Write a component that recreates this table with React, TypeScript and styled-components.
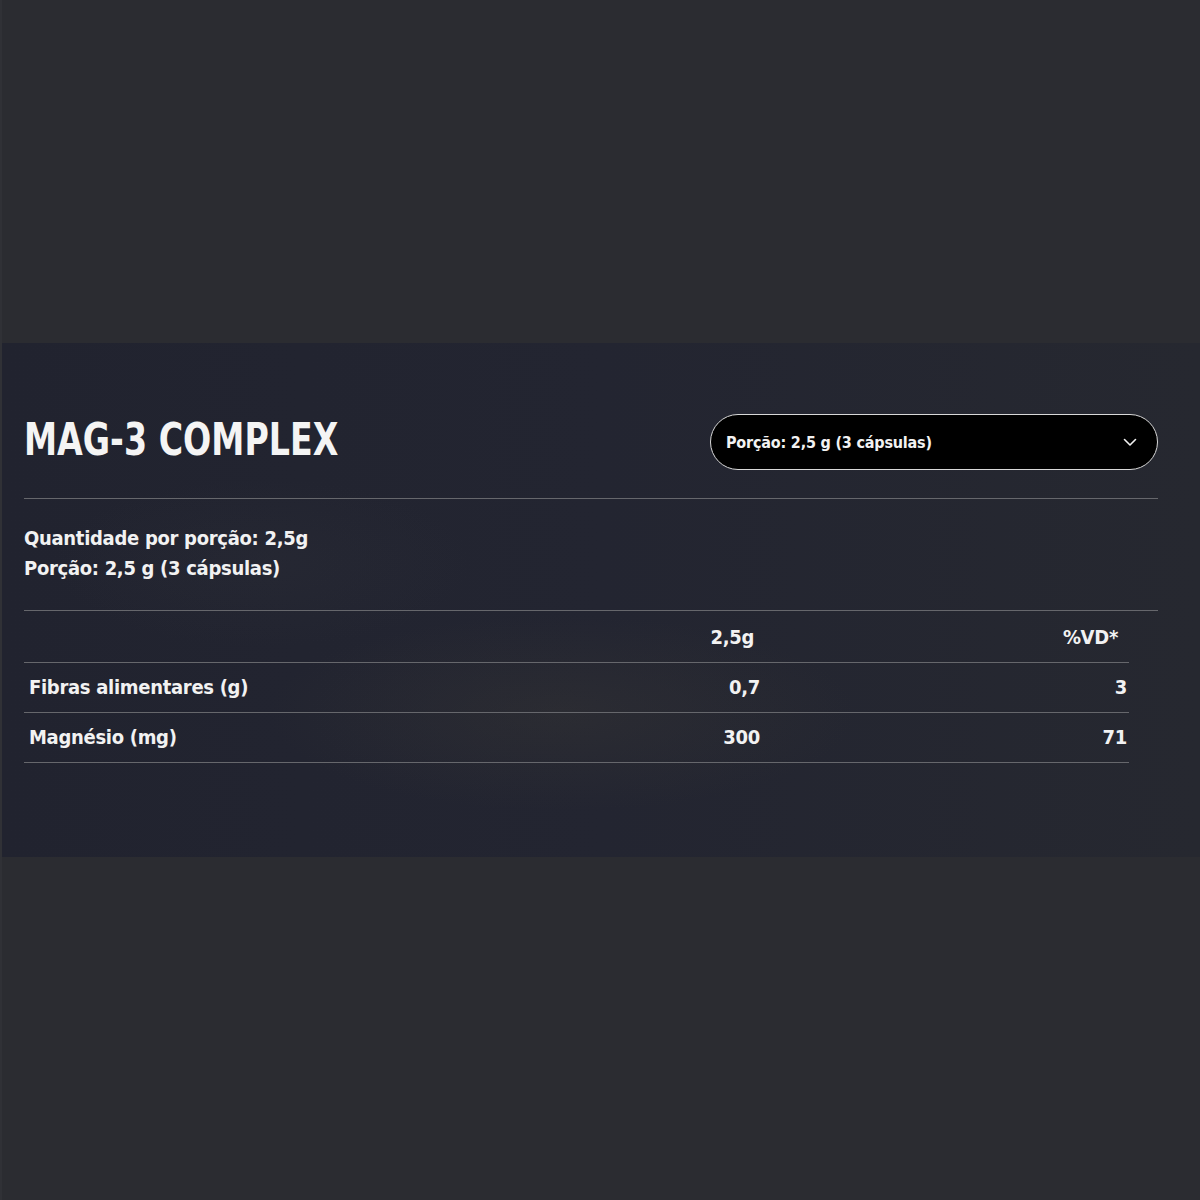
import React from "react";
import styled, { createGlobalStyle } from "styled-components";

const Global = createGlobalStyle`
  html, body { margin: 0; padding: 0; background: #2b2c31; }
  body { font-family: "DejaVu Sans Condensed", "DejaVu Sans", sans-serif; color: #f2f2f2; }
  * { box-sizing: border-box; }
`;

const Page = styled.div`
  width: 1200px;
  height: 1200px;
  padding-top: 343px;
  background: #2b2c31;
  border-left: 2px solid #303136;
`;

const Section = styled.section`
  height: 514px;
  padding: 71px 42px 0 22px;
  background:
    radial-gradient(ellipse 420px 140px at 560px 370px, rgba(62, 60, 54, 0.3), transparent 70%),
    radial-gradient(ellipse 300px 120px at 260px 220px, rgba(50, 52, 60, 0.22), transparent 70%),
    linear-gradient(90deg, #21232f 0%, #232531 50%, #262830 100%);
`;

const HeaderRow = styled.div`
  display: flex;
  align-items: center;
  justify-content: space-between;
  height: 56px;
  margin-bottom: 28px;
`;

const Title = styled.h2`
  margin: 0;
  font-weight: 700;
  font-size: 44px;
  line-height: 1;
  color: #f4f4f4;
  transform: translateY(-2px) scaleX(0.84);
  transform-origin: left center;
  white-space: nowrap;
`;

const Select = styled.button`
  width: 448px;
  height: 56px;
  border: 1.5px solid #d8d8d8;
  border-radius: 28px;
  background: #000;
  color: #f2f2f2;
  display: flex;
  align-items: center;
  justify-content: space-between;
  padding: 0 19px 0 15px;
  font-family: inherit;
  font-weight: 700;
  font-size: 16px;
  letter-spacing: -0.2px;
  cursor: pointer;
`;

const Divider = styled.div`
  height: 1px;
  background: #66676c;
`;

const Info = styled.div`
  padding: 24px 0 27px;
  font-weight: 700;
  font-size: 20px;
  line-height: 30px;
  letter-spacing: -0.3px;
`;

const Table = styled.div`
  width: 1105px;
`;

const Row = styled.div<{ $head?: boolean }>`
  display: grid;
  grid-template-columns: 576px 160px 1fr;
  align-items: center;
  height: ${(p) => (p.$head ? 51 : 47)}px;
  padding-bottom: ${(p) => (p.$head ? 0 : 2)}px;
  border-bottom: 1px solid #66676c;
  box-sizing: content-box;
  font-weight: 700;
  font-size: 20px;
  letter-spacing: -0.3px;
`;

const Cell = styled.div<{ $align?: "left" | "right"; $pr?: number; $pl?: number }>`
  text-align: ${(p) => p.$align || "left"};
  padding-right: ${(p) => p.$pr ?? 0}px;
  padding-left: ${(p) => p.$pl ?? 0}px;
  white-space: nowrap;
`;

const Chevron = () => (
  <svg width="16" height="16" viewBox="0 0 16 16" fill="none">
    <polyline points="2.5,5.5 8,11 13.5,5.5" stroke="#f2f2f2" strokeWidth="1.6" strokeLinecap="round" strokeLinejoin="round" />
  </svg>
);

const rows = [
  { name: "Fibras alimentares (g)", value: "0,7", vd: "3" },
  { name: "Magnésio (mg)", value: "300", vd: "71" },
];

export default function App() {
  return (
    <>
      <Global />
      <Page>
        <Section>
          <HeaderRow>
            <Title>MAG-3 COMPLEX</Title>
            <Select>
              <span>Porção: 2,5 g (3 cápsulas)</span>
              <Chevron />
            </Select>
          </HeaderRow>
          <Divider />
          <Info>
            <div>Quantidade por porção: 2,5g</div>
            <div>Porção: 2,5 g (3 cápsulas)</div>
          </Info>
          <Divider />
          <Table>
            <Row $head>
              <Cell />
              <Cell $align="right" $pr={6}>2,5g</Cell>
              <Cell $align="right" $pr={11}>%VD*</Cell>
            </Row>
            {rows.map((r) => (
              <Row key={r.name}>
                <Cell $pl={5}>{r.name}</Cell>
                <Cell $align="right">{r.value}</Cell>
                <Cell $align="right" $pr={2}>{r.vd}</Cell>
              </Row>
            ))}
          </Table>
        </Section>
      </Page>
    </>
  );
}
